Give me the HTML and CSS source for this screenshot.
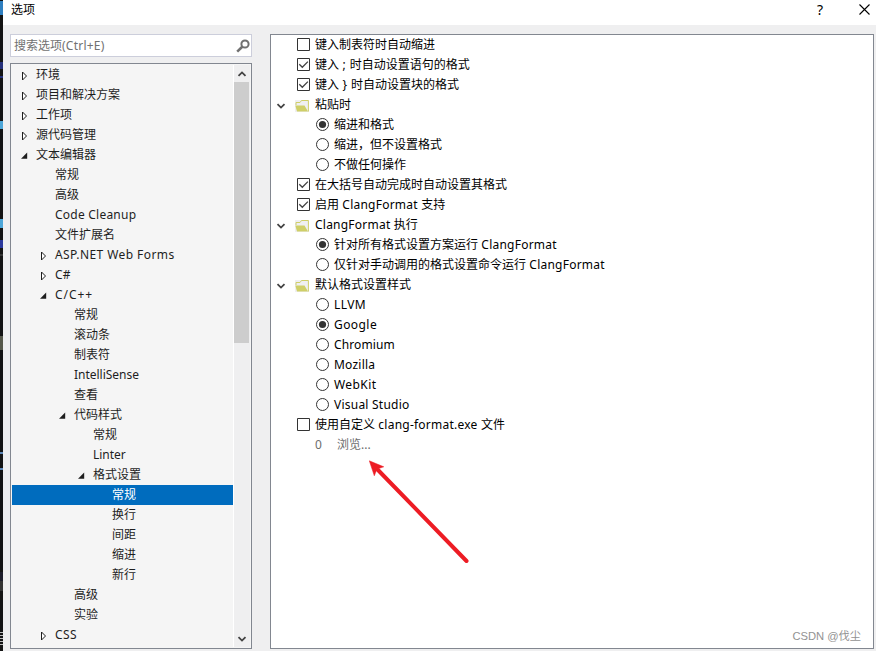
FILE: index.html
```html
<!DOCTYPE html>
<html lang="zh-CN">
<head>
<meta charset="utf-8">
<title>选项</title>
<link rel="stylesheet" href="styles.css">
</head>
<body>
<svg class="symbols" width="0" height="0">
  <symbol id="closed" viewBox="0 0 8 10"><path d="M1.5 1v8L5.5 5z" fill="#fff" stroke="#1e1e1e"/></symbol>
  <symbol id="open" viewBox="0 0 8 10"><path d="M6.2 1.5v6.2H0z" fill="#1e1e1e"/></symbol>
  <symbol id="down" viewBox="0 0 10 8"><path d="M1.5 2.2L5 5.6l3.5-3.4" fill="none" stroke="#424242" stroke-width="1.8"/></symbol>
  <symbol id="folder" viewBox="0 0 14 12"><path d="M0 0h14v12H0z" fill="#efeff2"/><path d="M1 5V2.5h4l1.5-2h6.9v11" fill="none" stroke="#cfcf68"/><path d="M.3 5.5h9.2l3.5 6H2z" fill="#cfcf68"/></symbol>
  <symbol id="check" viewBox="0 0 13 13"><path d="M.5.5h12v12H.5z" fill="#fff" stroke="#333"/><path d="M2.3 6.3l3 3 5.6-5.7" fill="none" stroke="#424242" stroke-width="1.3"/></symbol>
  <symbol id="uncheck" viewBox="0 0 13 13"><path d="M.5.5h12v12H.5z" fill="#fff" stroke="#333"/></symbol>
  <symbol id="radio" viewBox="0 0 13 13"><circle cx="6.5" cy="6.5" r="6" fill="#fff" stroke="#333"/></symbol>
  <symbol id="radio-on" viewBox="0 0 13 13"><circle cx="6.5" cy="6.5" r="6" fill="#fff" stroke="#333"/><circle cx="6.5" cy="6.5" r="3.6" fill="#333"/></symbol>
</svg>
<div class="edge"></div>
<main class="window">
  <header class="titlebar"><h1>选项</h1><span class="help">?</span>
    <svg class="close" width="11" height="11" viewBox="0 0 11 11"><path d="M.5.5l10 10m0-10l-10 10" stroke="#000" stroke-width="1.1"/></svg>
  </header>
  <div class="body">
    <aside class="side">
      <div class="search"><span>搜索选项<i class="wide">(Ctrl+E)</i></span>
        <svg width="14" height="14" viewBox="0 0 14 14" fill="none" stroke="#717171"><circle cx="9" cy="5" r="3.6" stroke-width="2"/><path d="M6.5 7.5L1.2 12.6" stroke-width="2.6"/></svg>
      </div>
      <div class="treebox">
        <ul class="tree">
          <li class="l0"><svg><use href="#closed"/></svg>环境</li>
          <li class="l0"><svg><use href="#closed"/></svg>项目和解决方案</li>
          <li class="l0"><svg><use href="#closed"/></svg>工作项</li>
          <li class="l0"><svg><use href="#closed"/></svg>源代码管理</li>
          <li class="l0"><svg><use href="#open"/></svg>文本编辑器</li>
          <li class="l1"><svg></svg>常规</li>
          <li class="l1"><svg></svg>高级</li>
          <li class="l1"><svg></svg><i class="wide">Code Cleanup</i></li>
          <li class="l1"><svg></svg>文件扩展名</li>
          <li class="l1"><svg><use href="#closed"/></svg><i class="wider">ASP.NET Web Forms</i></li>
          <li class="l1"><svg><use href="#closed"/></svg><i>C#</i></li>
          <li class="l1"><svg><use href="#open"/></svg><i class="widest">C/C++</i></li>
          <li class="l2"><svg></svg>常规</li>
          <li class="l2"><svg></svg>滚动条</li>
          <li class="l2"><svg></svg>制表符</li>
          <li class="l2"><svg></svg><i class="tight">IntelliSense</i></li>
          <li class="l2"><svg></svg>查看</li>
          <li class="l2"><svg><use href="#open"/></svg>代码样式</li>
          <li class="l3"><svg></svg>常规</li>
          <li class="l3"><svg></svg><i class="tight">Linter</i></li>
          <li class="l3"><svg><use href="#open"/></svg>格式设置</li>
          <li class="l4 selected"><svg></svg>常规</li>
          <li class="l4"><svg></svg>换行</li>
          <li class="l4"><svg></svg>间距</li>
          <li class="l4"><svg></svg>缩进</li>
          <li class="l4"><svg></svg>新行</li>
          <li class="l2"><svg></svg>高级</li>
          <li class="l2"><svg></svg>实验</li>
          <li class="l1"><svg><use href="#closed"/></svg><i class="wider">CSS</i></li>
        </ul>
        <div class="scrollbar">
          <svg class="up" width="10" height="8"><use href="#down"/></svg>
          <div class="thumb"></div>
          <svg width="10" height="8"><use href="#down"/></svg>
        </div>
      </div>
    </aside>
    <section class="options">
      <div class="row"><svg class="box"><use href="#uncheck"/></svg>键入制表符时自动缩进</div>
      <div class="row"><svg class="box"><use href="#check"/></svg>键入<i class="wider">&nbsp;;&nbsp;</i>时自动设置语句的格式</div>
      <div class="row"><svg class="box"><use href="#check"/></svg>键入<i class="wider">&nbsp;}&nbsp;</i>时自动设置块的格式</div>
      <div class="row group"><svg class="arrow"><use href="#down"/></svg><svg class="folder"><use href="#folder"/></svg>粘贴时</div>
      <div class="row sub"><svg class="box"><use href="#radio-on"/></svg>缩进和格式</div>
      <div class="row sub"><svg class="box"><use href="#radio"/></svg>缩进，但不设置格式</div>
      <div class="row sub"><svg class="box"><use href="#radio"/></svg>不做任何操作</div>
      <div class="row"><svg class="box"><use href="#check"/></svg>在大括号自动完成时自动设置其格式</div>
      <div class="row"><svg class="box"><use href="#check"/></svg>启用<i class="wide">&nbsp;ClangFormat&nbsp;</i>支持</div>
      <div class="row group"><svg class="arrow"><use href="#down"/></svg><svg class="folder"><use href="#folder"/></svg><i class="wide">ClangFormat&nbsp;</i>执行</div>
      <div class="row sub"><svg class="box"><use href="#radio-on"/></svg>针对所有格式设置方案运行<i class="wide">&nbsp;ClangFormat</i></div>
      <div class="row sub"><svg class="box"><use href="#radio"/></svg>仅针对手动调用的格式设置命令运行<i class="wide">&nbsp;ClangFormat</i></div>
      <div class="row group"><svg class="arrow"><use href="#down"/></svg><svg class="folder"><use href="#folder"/></svg>默认格式设置样式</div>
      <div class="row sub"><svg class="box"><use href="#radio"/></svg><i class="wider">LLVM</i></div>
      <div class="row sub"><svg class="box"><use href="#radio-on"/></svg><i class="wider">Google</i></div>
      <div class="row sub"><svg class="box"><use href="#radio"/></svg><i>Chromium</i></div>
      <div class="row sub"><svg class="box"><use href="#radio"/></svg><i class="wide">Mozilla</i></div>
      <div class="row sub"><svg class="box"><use href="#radio"/></svg><i class="wider">WebKit</i></div>
      <div class="row sub"><svg class="box"><use href="#radio"/></svg><i class="wide">Visual Studio</i></div>
      <div class="row"><svg class="box"><use href="#uncheck"/></svg>使用自定义<i class="wide">&nbsp;clang-format.exe&nbsp;</i>文件</div>
      <div class="row browse"><i>0</i><span>浏览<i class="tight">...</i></span></div>
      <p class="credit">CSDN @伐尘</p>
    </section>
  </div>
</main>
<svg class="pointer" width="102" height="106" viewBox="0 0 102 106"><path d="M9 10L97.5 101" stroke="#ed1c24" stroke-width="4" stroke-linecap="round"/><path d="M.3.8l14.5 6-5.8 2-1.5 1.5-2.2 5.5z" fill="#ed1c24" stroke="#ed1c24" stroke-width=".5"/></svg>
</body>
</html>
```
FILE: styles.css
```css
* { box-sizing: border-box; }
body {
  margin: 0;
  width: 876px;
  height: 651px;
  display: flex;
  overflow: hidden;
  font: 12px/20px "Noto Sans", "Noto Sans CJK SC", sans-serif;
  color: #1e1e1e;
  white-space: nowrap;
}
i { font-style: normal; letter-spacing: 0.1px; }
.tight { letter-spacing: -0.02px; }
.wide { letter-spacing: 0.23px; }
.wider { letter-spacing: 0.43px; }
.widest { letter-spacing: 0.95px; }
svg { flex: none; display: block; }
.symbols { position: absolute; }
.edge {
  width: 3px;
  background: linear-gradient(#111 0 1px, #2f7fc0 1px 15px, #141414 15px 62px, #25307a 62px 69px, #141414 69px 76px, #25307a 76px 78px, #141414 78px 121px, #4da6d8 121px 129px, #141414 129px 219px, #4da6d8 219px 228px, #141414 228px 240px, #2b389c 240px 248px, #141414 248px 254px, #333 254px 256px, #141414 256px 336px, #56584a 336px 350px, #141414 350px 452px, #5d86b5 452px 454px, #141414 454px 468px, #5d86b5 468px 470px, #141414 470px 572px, #1c1c2a 572px 581px, #333 581px 591px, #141414 591px 632px, #bbb 632px 633px, #141414 633px 635px, #bbb 635px 636px, #141414 636px 638px, #bbb 638px 639px, #141414 639px 641px, #bbb 641px 642px, #141414 642px 644px, #bbb 644px 645px, #141414 645px);
}
.window { flex: 1; display: flex; flex-direction: column; background: #efeff0; }
.titlebar {
  height: 25px;
  flex: none;
  display: flex;
  align-items: center;
  background: #fff;
  padding: 0 6px 5px 8px;
  color: #000;
}
.titlebar h1 { margin: 0; flex: 1; font-size: 12px; font-weight: 400; }
.help { font-size: 14px; margin-right: 36px; }
.close { margin-top: -1px; }
.body { flex: 1; display: flex; gap: 18px; padding: 9px 2px 2px 7px; min-height: 0; }
.side { width: 242px; display: flex; flex-direction: column; gap: 6px; }
.search {
  height: 23px;
  flex: none;
  display: flex;
  align-items: center;
  justify-content: space-between;
  padding: 0 1px 0 3px;
  background: #fff;
  border: 1px solid #cccedb;
  color: #717171;
}
.treebox {
  flex: 1;
  min-height: 0;
  display: flex;
  justify-content: space-between;
  background: #f5f5f5;
  border: 1px solid #828790;
  padding: 1px;
}
.tree { list-style: none; margin: 0; padding: 0; width: 221px; }
.tree li { height: 20px; display: flex; align-items: center; gap: 7px; }
.tree svg { width: 8px; height: 10px; margin-top: 1px; }
.l0 { padding-left: 9px; }
.l1 { padding-left: 28px; }
.l2 { padding-left: 47px; }
.l3 { padding-left: 66px; }
.l4 { padding-left: 85px; }
.selected { background: #006cbe; color: #fff; }
.scrollbar {
  width: 17px;
  display: flex;
  flex-direction: column;
  align-items: center;
  justify-content: space-between;
  background: #efeff0;
  border-left: 1px solid #fff;
  padding: 5px 1px 4px 0;
}
.up { transform: rotate(180deg); }
.thumb { width: 15px; height: 261px; background: #cdcdcd; margin: 4px 0 auto; }
.options {
  flex: 1;
  background: #fff;
  border: 1px solid #828790;
  display: flex;
  flex-direction: column;
  color: #000;
}
.row { height: 20px; display: flex; align-items: center; padding-left: 26px; }
.box { width: 13px; height: 13px; margin: 0 5px 1px 0; }
.sub { padding-left: 45px; }
.group { padding-left: 5px; }
.arrow { width: 10px; height: 8px; margin: 1px 9px 0 0; }
.folder { width: 14px; height: 12px; margin: 2px 6px 0 0; }
.browse { padding-left: 44px; gap: 15px; color: #6d6d6d; }
.credit { margin: auto 12px 2px auto; color: #929292; font: 11.2px/20px "Liberation Sans", "Noto Sans CJK SC", sans-serif; }
.pointer { position: absolute; left: 369px; top: 460px; }
```
